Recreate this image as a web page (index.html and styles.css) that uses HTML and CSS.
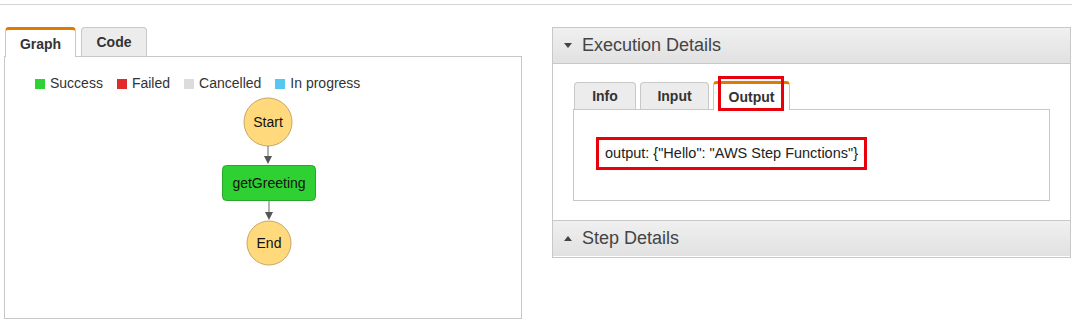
FILE: index.html
```html
<!DOCTYPE html>
<html lang="en">
  <head>
    <meta charset="UTF-8" />
    <title>Step Functions Execution</title>
    <link rel="stylesheet" href="styles.css">
  </head>
  <body>
    <div class="top-rule"></div>

    <div class="layout">
      <!-- Left: graph / code -->
      <div class="graph-col">
        <div class="tabs">
          <div class="tab tab-active">Graph</div>
          <div class="tab">Code</div>
        </div>
        <div class="graph-panel">
          <div class="legend">
            <span class="legend-item"><i class="swatch success"></i>Success</span>
            <span class="legend-item"><i class="swatch failed"></i>Failed</span>
            <span class="legend-item"><i class="swatch cancelled"></i>Cancelled</span>
            <span class="legend-item"><i class="swatch progress"></i>In progress</span>
          </div>
          <svg class="graph" width="516" height="180" viewBox="0 0 516 180">
            <circle cx="263" cy="28" r="24" fill="#ffd97b" stroke="#c5a767" stroke-width="1"/>
            <text x="263" y="33" text-anchor="middle" class="node-label">Start</text>
            <line x1="263" y1="52" x2="263" y2="63" stroke="#666" stroke-width="1"/>
            <path d="M259 62 L267 62 L263 70 Z" fill="#555"/>
            <rect x="217.5" y="71.5" width="93" height="35" rx="4" fill="#2ed131" stroke="#2aa52c"/>
            <text x="264" y="94" text-anchor="middle" class="node-label">getGreeting</text>
            <line x1="264" y1="107" x2="264" y2="119" stroke="#666" stroke-width="1"/>
            <path d="M260 118 L268 118 L264 126 Z" fill="#555"/>
            <circle cx="264" cy="149" r="22" fill="#ffd97b" stroke="#c5a767" stroke-width="1"/>
            <text x="264" y="154" text-anchor="middle" class="node-label">End</text>
          </svg>
        </div>
      </div>

      <!-- Right: details -->
      <div class="details">
        <div class="section-header">
          <span class="caret caret-down"></span>Execution Details
        </div>
        <div class="section-body">
          <div class="tabs small">
            <div class="tab">Info</div>
            <div class="tab">Input</div>
            <div class="tab tab-active">Output<span class="callout"></span></div>
          </div>
          <div class="output-box">
            <div class="output-line">output: {"Hello": "AWS Step Functions"}</div>
          </div>
        </div>
        <div class="section-header last">
          <span class="caret caret-up"></span>Step Details
        </div>
      </div>
    </div>
  </body>
</html>
```

FILE: styles.css
```css
* {
  margin: 0;
  padding: 0;
  box-sizing: border-box;
}

body {
  font-family: "Liberation Sans", Arial, sans-serif;
  background: #fff;
  color: #333;
  width: 1080px;
  height: 331px;
  overflow: hidden;
}

.top-rule {
  height: 5px;
  border-bottom: 1px solid #d5d5d5;
  width: 1072px;
}

.layout {
  display: flex;
  gap: 30px;
  padding: 22px 0 0 4px;
}

/* Tabs */
.tabs {
  display: flex;
  align-items: flex-end;
  gap: 5px;
  padding-left: 1px;
}

.tab {
  height: 29px;
  padding: 0 14px;
  display: flex;
  align-items: center;
  justify-content: center;
  background: #ececec;
  border: 1px solid #c8c8c8;
  border-bottom: none;
  border-radius: 4px 4px 0 0;
  font-size: 14px;
  font-weight: bold;
  color: #333;
}

.tab-active {
  height: 30px;
  background: #fff;
  border-top: 3px solid #e07b00;
  margin-bottom: -1px;
  position: relative;
}

.graph-col .tab {
  width: 66px;
}

.graph-col .tab-active {
  width: 71px;
}

/* Graph panel */
.graph-panel {
  width: 518px;
  height: 263px;
  border: 1px solid #c8c8c8;
}

.legend {
  display: flex;
  gap: 14px;
  padding: 18px 0 0 30px;
  font-size: 14px;
  color: #333;
  line-height: 17px;
}

.legend-item {
  display: flex;
  align-items: center;
}

.swatch {
  display: inline-block;
  width: 10px;
  height: 10px;
  margin-right: 5px;
}

.success { background: #2dd334; }
.failed { background: #e02b2b; }
.cancelled { background: #dcdcdc; }
.progress { background: #56c8ef; }

.graph {
  display: block;
  margin-top: 2px;
}

.node-label {
  font-family: "Liberation Sans", Arial, sans-serif;
  font-size: 14px;
  fill: #111;
}

/* Details */
.details {
  width: 519px;
  height: 231px;
  border: 1px solid #c8c8c8;
}

.section-header {
  height: 36px;
  display: flex;
  align-items: center;
  padding-left: 11px;
  background: linear-gradient(#f0f0f0, #e1e1e1);
  border-bottom: 1px solid #c8c8c8;
  font-size: 18px;
  color: #444;
}

.section-header.last {
  border-top: 1px solid #c8c8c8;
  border-bottom: none;
}

.caret {
  width: 0;
  height: 0;
  margin-right: 10px;
  border-left: 4px solid transparent;
  border-right: 4px solid transparent;
}

.caret-down {
  border-top: 5px solid #444;
}

.caret-up {
  border-bottom: 5px solid #444;
}

.section-body {
  height: 156px;
  padding: 17px 20px 0 20px;
}

.tabs.small {
  gap: 4px;
  padding-left: 1px;
}

.tabs.small .tab {
  height: 27px;
}

.tabs.small .tab:nth-child(1) { width: 62px; }
.tabs.small .tab:nth-child(2) { width: 69px; }

.tabs.small .tab-active {
  width: 77px;
  height: 29px;
  margin-left: 0;
}

.callout {
  position: absolute;
  left: 4px;
  top: -8px;
  width: 66px;
  height: 35px;
  border: 3px solid #e8000b;
}

.output-box {
  width: 477px;
  height: 92px;
  border: 1px solid #c8c8c8;
  padding: 27px 0 0 22px;
}

.output-line {
  display: inline-block;
  border: 3px solid #e8000b;
  height: 33px;
  padding: 0 6px 0 6px;
  line-height: 27px;
  font-size: 14.5px;
  color: #222;
}
```
